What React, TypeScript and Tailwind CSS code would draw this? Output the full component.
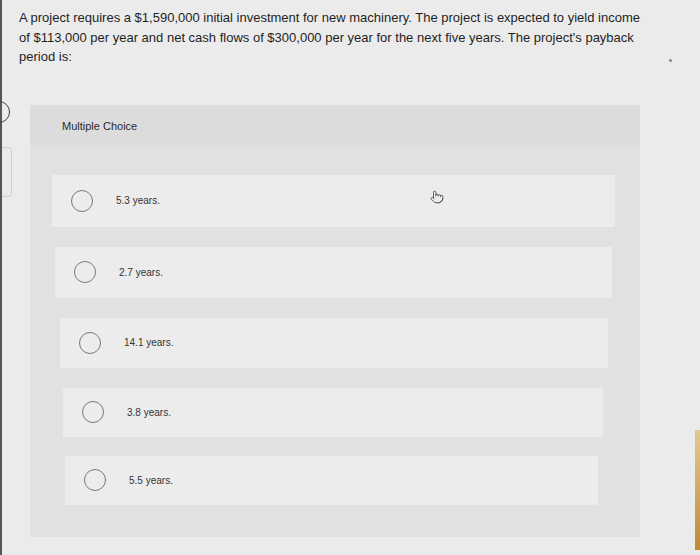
import React from 'react';
import { Pointer } from 'lucide-react';

const options = [
  { label: '5.3 years.', ml: 'ml-[22px]', w: 'w-[563px]', h: 'h-[52px]', mt: 'mt-[30px]' },
  { label: '2.7 years.', ml: 'ml-[25px]', w: 'w-[557px]', h: 'h-[51px]', mt: 'mt-[20px]' },
  { label: '14.1 years.', ml: 'ml-[30px]', w: 'w-[548px]', h: 'h-[50px]', mt: 'mt-[20px]' },
  { label: '3.8 years.', ml: 'ml-[33px]', w: 'w-[540px]', h: 'h-[49px]', mt: 'mt-[20px]' },
  { label: '5.5 years.', ml: 'ml-[35px]', w: 'w-[533px]', h: 'h-[49px]', mt: 'mt-[19px]' },
];

const App: React.FC = () => {
  return (
    <div className="relative w-[700px] h-[555px] overflow-hidden bg-[#ebebeb] border-l-2 border-[#555] font-['Liberation_Sans',Arial,sans-serif]">
      {/* bits of the window behind */}
      <div className="absolute -left-[14px] top-[101px] w-[22px] h-[22px] rounded-full border-[1.5px] border-[#444]" />
      <div className="absolute -left-[10px] top-[147px] w-[20px] h-[50px] rounded-[3px] border border-[#cfcfcf]" />
      <div className="absolute right-0 top-[430px] w-[5px] h-[120px] bg-gradient-to-b from-[#e2c98f] to-[#c08a2e]" />

      <p className="pl-[17px] pt-[8px] text-[13px] leading-[19.5px] text-[#1f1f1f] whitespace-nowrap">
        A project requires a $1,590,000 initial investment for new machinery. The project is expected to yield income
        <br />
        of $113,000 per year and net cash flows of $300,000 per year for the next five years. The project's payback
        <br />
        period is:
      </p>

      <div className="flex">
        <div className="ml-[28px] mt-[38px] w-[610px] h-[432px] bg-[#e1e1e1] flex flex-col">
          <div className="h-[40px] bg-[#dcdcdc] pl-[32px] pt-[15px] text-[11px] leading-[13px] text-[#2a2a2a]">
            Multiple Choice
          </div>
          {options.map((o, i) => (
            <div
              key={o.label}
              className={`${o.ml} ${o.w} ${o.h} ${o.mt} bg-[#ececec] flex items-center pl-[19px] gap-[23px]`}
            >
              <span className="w-[22px] h-[22px] rounded-full border-[1.5px] border-[#7a7a7a] shrink-0" />
              <span className="text-[10px] text-[#333]">{o.label}</span>
              {i === 0 && (
                <span className="ml-[247px] -mt-[8px] text-[#555]">
                  <Pointer size={14} strokeWidth={1.6} />
                </span>
              )}
            </div>
          ))}
        </div>
        <div className="ml-[29px] mt-[-8px] w-[3px] h-[3px] rounded-full bg-[#888]" />
      </div>
    </div>
  );
};

export default App;
